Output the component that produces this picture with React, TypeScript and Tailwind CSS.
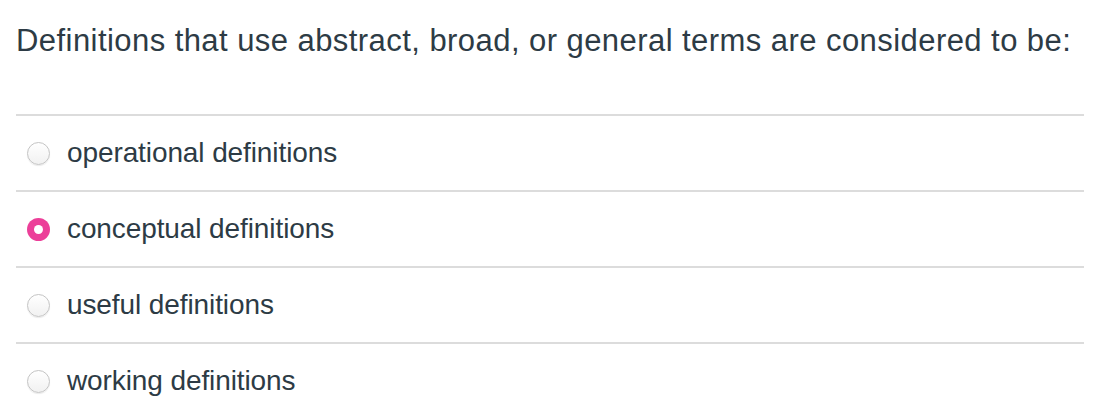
import React from "react";

const options = [
  { label: "operational definitions", selected: false },
  { label: "conceptual definitions", selected: true },
  { label: "useful definitions", selected: false },
  { label: "working definitions", selected: false },
];

function Radio({ selected }: { selected: boolean }) {
  if (selected) {
    return (
      <span className="flex h-[23px] w-[23px] shrink-0 items-center justify-center rounded-full bg-[#ec3f99]">
        <span className="h-[9px] w-[9px] rounded-full bg-white" />
      </span>
    );
  }
  return (
    <span className="h-[23px] w-[23px] shrink-0 rounded-full border border-[#c4c4c4] bg-gradient-to-b from-white to-[#f1f1f1] shadow-[0_1px_1px_rgba(0,0,0,0.08)]" />
  );
}

export default function App() {
  return (
    <div
      className="min-h-[414px] bg-white text-[#2d3b45]"
      style={{ fontFamily: '"Liberation Sans", Arial, sans-serif' }}
    >
      <div className="ml-4 w-[1068px]">
        <div className="h-[114px] pt-[23px] text-[31px] leading-[36px] tracking-[0.44px]">
          Definitions that use abstract, broad, or general terms are considered to be:
        </div>
        {options.map((o) => (
          <div
            key={o.label}
            className="flex h-[76px] items-center gap-[17px] border-t-2 border-[#dcdcdc] pl-[11px]"
          >
            <Radio selected={o.selected} />
            <span className="text-[28px] leading-[32px] tracking-[-0.1px]">{o.label}</span>
          </div>
        ))}
      </div>
    </div>
  );
}
